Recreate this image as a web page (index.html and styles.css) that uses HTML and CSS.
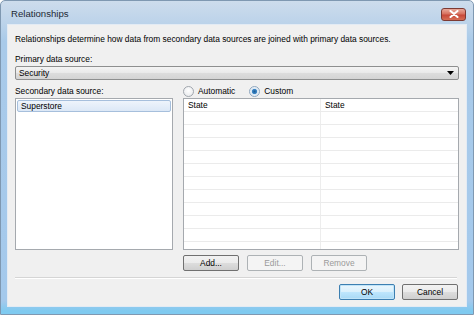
FILE: index.html
```html
<!DOCTYPE html>
<html>
<head>
<meta charset="utf-8">
<link rel="stylesheet" href="styles.css">
</head>
<body>
<div class="window">
  <div class="titlebar">
    <span class="title">Relationships</span>
    <div class="close">
      <svg width="10" height="8" viewBox="0 0 10 8"><path d="M1.5 1 L8.5 7 M8.5 1 L1.5 7" stroke="#fff" stroke-width="2" stroke-linecap="round"/></svg>
    </div>
  </div>
  <div class="client">
    <div class="desc">Relationships determine how data from secondary data sources are joined with primary data sources.</div>
    <div class="lbl">Primary data source:</div>
    <div class="combo">
      <span>Security</span>
      <svg width="7" height="4" viewBox="0 0 7 4"><path d="M0 0 H7 L3.5 4 Z" fill="#000"/></svg>
    </div>
    <div class="main">
      <div class="left">
        <div class="lbl">Secondary data source:</div>
        <div class="listbox">
          <div class="item sel">Superstore</div>
        </div>
      </div>
      <div class="right">
        <div class="radios">
          <span class="radio"></span><span class="rlabel">Automatic</span>
          <span class="radio checked"></span><span class="rlabel">Custom</span>
        </div>
        <div class="grid">
          <div class="row head"><div class="cell c1">State</div><div class="cell c2">State</div></div>
          <div class="row"><div class="cell c1"></div><div class="cell c2"></div></div>
          <div class="row"><div class="cell c1"></div><div class="cell c2"></div></div>
          <div class="row"><div class="cell c1"></div><div class="cell c2"></div></div>
          <div class="row"><div class="cell c1"></div><div class="cell c2"></div></div>
          <div class="row"><div class="cell c1"></div><div class="cell c2"></div></div>
          <div class="row"><div class="cell c1"></div><div class="cell c2"></div></div>
          <div class="row"><div class="cell c1"></div><div class="cell c2"></div></div>
          <div class="row"><div class="cell c1"></div><div class="cell c2"></div></div>
          <div class="row"><div class="cell c1"></div><div class="cell c2"></div></div>
          <div class="row"><div class="cell c1"></div><div class="cell c2"></div></div>
          <div class="row last"><div class="cell c1"></div><div class="cell c2"></div></div>
        </div>
        <div class="btnrow">
          <div class="btn">Add...</div>
          <div class="btn disabled">Edit...</div>
          <div class="btn disabled">Remove</div>
        </div>
      </div>
    </div>
    <div class="sep"></div>
    <div class="footer">
      <div class="btn default">OK</div>
      <div class="btn">Cancel</div>
    </div>
  </div>
</div>
</body>
</html>
```
FILE: styles.css
```css
html, body {
  margin: 0;
  padding: 0;
  background: #fff;
}
body {
  font-family: "Liberation Sans", Arial, sans-serif;
  font-size: 8.4px;
  color: #000;
}
.window {
  width: 474px;
  height: 315px;
  box-sizing: border-box;
  border: 1px solid #7f98b1;
  border-radius: 5px 5px 0 0;
  background: linear-gradient(#cddcec 0px, #bcd3ea 22px, #a9cae9 40px, #a4c9ec 300px, #7fcaf0 310px);
  display: flex;
  flex-direction: column;
  padding: 0 6px 7px 6px;
}
.titlebar {
  height: 22px;
  display: flex;
  align-items: center;
  justify-content: space-between;
  padding-top: 1px;
}
.title {
  font-family: "Liberation Sans", Arial, sans-serif;
  font-size: 9.6px;
  color: #1e2a36;
  padding-left: 4px;
  padding-top: 1px;
}
.close {
  width: 25px;
  height: 13px;
  margin-right: 1px;
  margin-top: 2px;
  border: 1px solid #7d3a33;
  border-radius: 3px;
  background: linear-gradient(#e9a99b, #d7715f 45%, #c7493a 55%, #d66d55);
  display: flex;
  align-items: center;
  justify-content: center;
  box-sizing: border-box;
}
.client {
  flex: 1;
  background: #f0f0f0;
  border: 1px solid #e3ebf4;
  padding: 0 7px 0 7px;
  display: flex;
  flex-direction: column;
}
.desc {
  height: 12px;
  line-height: 12px;
  margin-top: 8px;
  white-space: nowrap;
}
.lbl {
  height: 12px;
  line-height: 12px;
}
.client > .lbl {
  margin-top: 8px;
}
.combo {
  margin-top: 1px;
  height: 14px;
  box-sizing: border-box;
  border: 1px solid #8e8f8f;
  border-radius: 2px;
  background: linear-gradient(#f4f4f4, #e9e9e9 50%, #dddddd 51%, #d4d4d4);
  display: flex;
  align-items: center;
  justify-content: space-between;
  padding: 0 4px 0 3px;
}
.main {
  display: flex;
  gap: 10px;
  margin-top: 5px;
}
.left {
  width: 158px;
  display: flex;
  flex-direction: column;
}
.listbox {
  margin-top: 1px;
  height: 152px;
  box-sizing: border-box;
  border: 1px solid #a5a9ae;
  background: #fff;
  padding: 1px;
}
.item {
  height: 12px;
  line-height: 12px;
  padding-left: 3px;
  box-sizing: border-box;
}
.item.sel {
  border: 1px solid #a6bfdc;
  border-radius: 2px;
  background: linear-gradient(#eef4fb, #dce8f6);
  line-height: 10px;
}
.right {
  flex: 1;
  display: flex;
  flex-direction: column;
}
.radios {
  height: 12px;
  display: flex;
  align-items: center;
}
.radio {
  width: 11px;
  height: 11px;
  box-sizing: border-box;
  border-radius: 50%;
  border: 1px solid #a0a6ad;
  background: radial-gradient(circle at 50% 40%, #ffffff, #e4e6e9);
  display: inline-block;
}
.radio.checked {
  border-color: #8fa7bf;
  background: radial-gradient(circle, #1b5d98 0, #3c85c4 2.2px, #d8e6f3 3px, #f4f6f8 5px);
}
.rlabel {
  margin-left: 4px;
  margin-right: 14px;
}
.grid {
  margin-top: 1px;
  height: 152px;
  box-sizing: border-box;
  border: 1px solid #a5a9ae;
  background: #fff;
  display: flex;
  flex-direction: column;
  overflow: hidden;
}
.row {
  height: 13px;
  box-sizing: border-box;
  border-bottom: 1px solid #ebebeb;
  display: flex;
  flex: none;
}
.row.last {
  border-bottom: none;
}
.cell {
  height: 12px;
  line-height: 12px;
  padding-left: 4px;
  box-sizing: border-box;
}
.c1 {
  width: 137px;
  border-right: 1px solid #ededed;
}
.c2 {
  flex: 1;
}
.btnrow {
  display: flex;
  gap: 8px;
  margin-top: 5px;
}
.btn {
  width: 56px;
  height: 16px;
  box-sizing: border-box;
  border: 1px solid #707070;
  border-radius: 2px;
  background: linear-gradient(#f2f2f2, #ebebeb 50%, #dddddd 51%, #cfcfcf);
  display: flex;
  align-items: center;
  justify-content: center;
  color: #000;
}
.btn.disabled {
  border-color: #adb2b5;
  background: #f4f4f4;
  color: #9a9a9a;
}
.btn.default {
  border-color: #3c7fb1;
  background: linear-gradient(#eaf6fd, #d9f0fc 50%, #bee6fd 51%, #a7d9f5);
  box-shadow: inset 0 0 0 1px #c0e4f8;
}
.sep {
  margin-top: 6px;
  margin-right: 2px;
  height: 0;
  border-top: 1px solid #d5d5d5;
  border-bottom: 1px solid #ffffff;
}
.footer {
  display: flex;
  justify-content: flex-end;
  gap: 7px;
  margin-top: 5px;
  padding-right: 1px;
}
```
